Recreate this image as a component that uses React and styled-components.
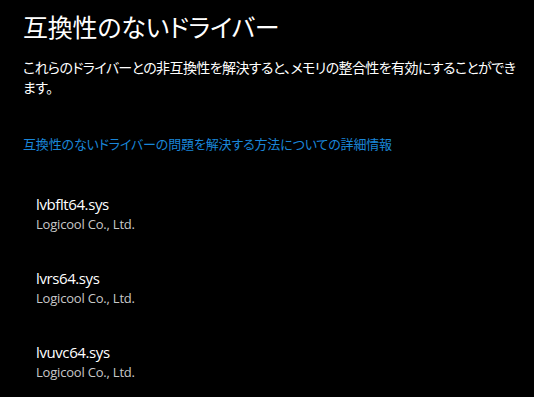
import React from "react";
import styled, { createGlobalStyle } from "styled-components";

const Global = createGlobalStyle`
  html, body { margin: 0; padding: 0; background: #000; }
  body { font-family: "Noto Sans CJK JP", "Noto Sans", sans-serif; color: #fff; }
`;

const Page = styled.div`
  width: 534px;
  height: 397px;
  background: #000;
  padding: 9px 0 0 23px;
  box-sizing: border-box;
  overflow: hidden;
`;

const Title = styled.h1`
  margin: 0;
  font-size: 25px;
  font-weight: 400;
  line-height: 34px;
  font-feature-settings: "palt";
  letter-spacing: -0.2px;
  color: #fff;
`;

const Desc = styled.p`
  margin: 14px 0 0;
  width: 503px;
  font-size: 14px;
  line-height: 20px;
  font-feature-settings: "palt";
  letter-spacing: -0.6px;
  color: #fff;
`;

const Link = styled.a`
  display: block;
  margin-top: 37px;
  font-size: 13px;
  line-height: 20px;
  font-feature-settings: "palt";
  letter-spacing: -0.15px;
  color: #1a86d8;
  text-decoration: none;
`;

const List = styled.div`
  display: flex;
  flex-direction: column;
  gap: 34px;
  margin-top: 40px;
  padding-left: 13px;
`;

const Item = styled.div`
  display: flex;
  flex-direction: column;
`;

const Name = styled.div`
  font-family: "Open Sans", "Noto Sans", sans-serif;
  font-size: 15px;
  line-height: 21px;
  color: #fff;
  letter-spacing: -0.4px;
`;

const Vendor = styled.div`
  font-family: "Open Sans", "Noto Sans", sans-serif;
  font-size: 13px;
  line-height: 19px;
  color: #c8c8c8;
  letter-spacing: -0.2px;
`;

const drivers = ["lvbflt64.sys", "lvrs64.sys", "lvuvc64.sys"];

export default function App() {
  return (
    <Page>
      <Global />
      <Title>互換性のないドライバー</Title>
      <Desc>
        これらのドライバーとの非互換性を解決すると、メモリの整合性を有効にすることができます。
      </Desc>
      <Link href="#">互換性のないドライバーの問題を解決する方法についての詳細情報</Link>
      <List>
        {drivers.map((d) => (
          <Item key={d}>
            <Name>{d}</Name>
            <Vendor>Logicool Co., Ltd.</Vendor>
          </Item>
        ))}
      </List>
    </Page>
  );
}
